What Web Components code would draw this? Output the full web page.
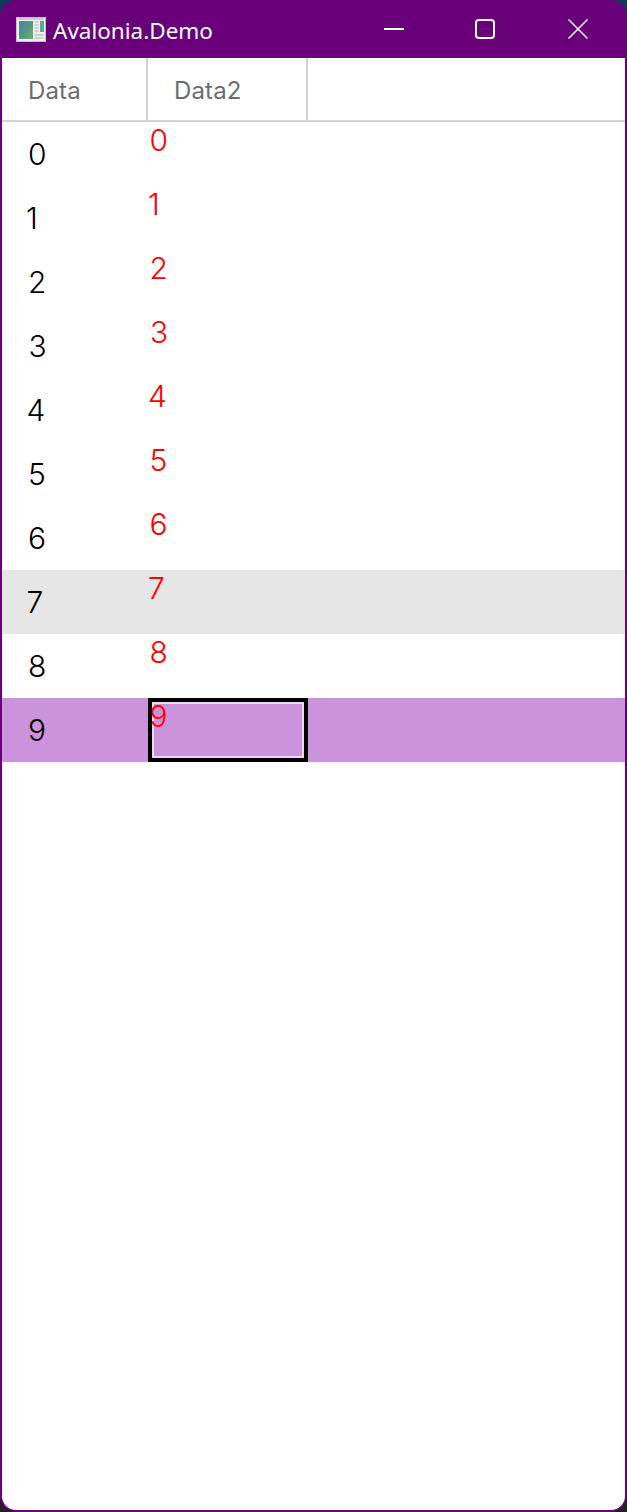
<!DOCTYPE html>
<html><head><meta charset="utf-8"><title>Avalonia.Demo</title>
<style>
html,body{margin:0;height:100%}
body{width:627px;height:1512px;overflow:hidden;background:linear-gradient(#0f3c5c 0,#12304a 60px,#222 1450px);}
</style></head><body>
<app-window>
  <title-bar slot="bar" label="Avalonia.Demo"></title-bar>
  <data-grid>
    <grid-header></grid-header>
    <grid-row v="0"></grid-row>
    <grid-row v="1"></grid-row>
    <grid-row v="2"></grid-row>
    <grid-row v="3"></grid-row>
    <grid-row v="4"></grid-row>
    <grid-row v="5"></grid-row>
    <grid-row v="6"></grid-row>
    <grid-row v="7" state="hover"></grid-row>
    <grid-row v="8"></grid-row>
    <grid-row v="9" state="selected"></grid-row>
  </data-grid>
</app-window>
<script>
const def=(n,html)=>customElements.define(n,class extends HTMLElement{
  connectedCallback(){ if(this.shadowRoot) return; const s=this.attachShadow({mode:'open'}); s.innerHTML=html(this); }
});
def('app-window',()=>`<style>
:host{display:flex;flex-direction:column;width:627px;height:1512px;box-sizing:border-box;background:#69007a;border-radius:16px;overflow:hidden;padding:0 2px 2px}
.b{flex:none;margin:0 -2px}
.c{flex:1;background:#fff;border-radius:0 0 14px 14px;overflow:hidden}
</style><div class="b"><slot name="bar"></slot></div><div class="c"><slot></slot></div>`);
def('title-bar',h=>`<style>
:host{display:flex;align-items:center;height:58px;color:#fff;font:22.5px/30px "Noto Sans","Roboto",sans-serif;box-sizing:border-box;padding:0 0 0 16px}
svg{display:block;flex:none}
.t{margin-left:7px;flex:1;position:relative;top:2px}
.btns{display:flex;align-items:center;width:259px;padding-left:16px;box-sizing:border-box;gap:0}
.btns svg{margin-right:71px}
</style>
<svg width="30" height="25" viewBox="0 0 30 25">
<defs><linearGradient id="g" x1="0" y1="0" x2="1" y2="1"><stop offset="0" stop-color="#4f7f9f"/><stop offset=".55" stop-color="#4f9a80"/><stop offset="1" stop-color="#6cb56a"/></linearGradient></defs>
<rect x=".5" y=".5" width="29" height="24" fill="#eef0ee" stroke="#bfc4c2"/>
<rect x="2" y="1" width="26" height="2" fill="#c9cfcc"/>
<rect x="3" y="4" width="14" height="18" fill="url(#g)"/>
<rect x="24" y="4" width="4" height="11" fill="#5da88f"/>
<path d="M18.5 5h4M18.5 8h4M18.5 11h4M18.5 14h4M18.5 18h9M18.5 21h9" stroke="#a9aeac" stroke-width="1.2"/>
</svg>
<span class="t">${h.getAttribute('label')}</span>
<div class="btns">
<svg width="20" height="20" viewBox="0 0 20 20"><rect x="0" y="9" width="20" height="2" fill="#fff"/></svg>
<svg width="20" height="20" viewBox="0 0 20 20"><rect x="1" y="1" width="18" height="18" rx="3" fill="none" stroke="#fff" stroke-width="2"/></svg>
<svg width="20" height="20" viewBox="0 0 20 20" style="margin:0 0 0 2px"><path d="M.5.5l19 19M19.5.5l-19 19" stroke="#fff" stroke-width="1.5" fill="none"/></svg>
</div>`);
def('data-grid',()=>`<style>:host{display:flex;flex-direction:column;font-family:Inter,"Liberation Sans",sans-serif}</style><slot></slot>`);
def('grid-header',()=>`<style>
:host{display:grid;grid-template-columns:146px 160px 1fr;height:64px;box-sizing:border-box;border-bottom:2px solid #d2d2d2;color:#6d6d6d;font:24px/30px Inter,sans-serif}
div{display:flex;align-items:center;box-sizing:border-box;border-right:2px solid #d2d2d2;padding-top:4px;letter-spacing:.15px}
.a{padding-left:26px}.b{padding-left:26px}
.c{border:0}
</style><div class="a">Data</div><div class="b">Data2</div><div class="c"></div>`);
const starts={0:28,1:26,2:28,3:28.4,4:26.4,5:28,6:28,7:26.4,8:28,9:28};
def('grid-row',h=>{
 const st=h.getAttribute('state'), v=h.getAttribute('v');
 const bg=st==='hover'?'#e6e6e6':st==='selected'?'#cb93db':'transparent';
 const focus=st==='selected'?'box-shadow:inset 0 0 0 4px #000,inset 0 0 0 6px #ecd9f2;':'';
 const x=starts[v];
 return `<style>
:host{display:grid;grid-template-columns:146px 160px 1fr;height:64px;background:${bg};font-size:30px;font-weight:350;line-height:36px}
.a{display:flex;align-items:center;padding-left:${x-2}px;color:#000;box-sizing:border-box}
.b{color:#f00;padding-left:${x-26.4}px;box-sizing:border-box;${focus}}
span{display:block}
</style><div class="a"><span>${v}</span></div><div class="b"><span>${v}</span></div><div></div>`;
});
</script>
</body></html>
